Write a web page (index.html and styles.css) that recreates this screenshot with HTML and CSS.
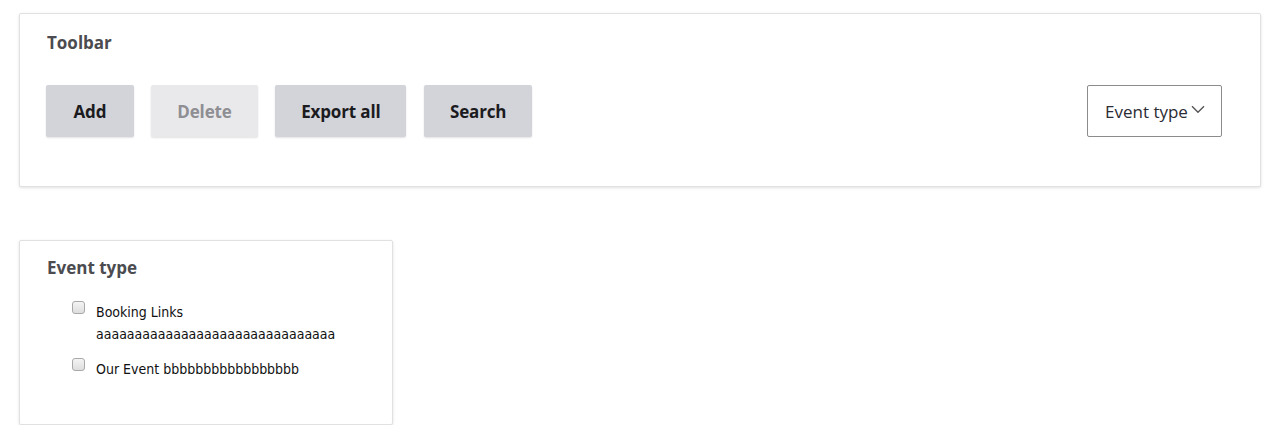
FILE: index.html
```html
<!DOCTYPE html>
<html lang="en">
<head>
<meta charset="utf-8">
<title>Toolbar</title>
<link rel="stylesheet" href="styles.css">
</head>
<body>
<section class="card toolbar-card">
  <h2 class="card-title">Toolbar</h2>
  <div class="toolbar">
    <div class="actions">
      <button class="btn">Add</button>
      <button class="btn" disabled>Delete</button>
      <button class="btn">Export all</button>
      <button class="btn">Search</button>
    </div>
    <button class="dropdown">
      <span>Event type</span>
      <svg class="chev" width="14" height="9" viewBox="0 0 14 9"><path d="M1 1.2 L7 7.2 L13 1.2" fill="none" stroke="#555" stroke-width="1.4"/></svg>
    </button>
  </div>
</section>

<section class="card filter-card">
  <h2 class="card-title">Event type</h2>
  <ul class="options">
    <li class="option"><input type="checkbox" class="check"><span class="opt-label">Booking Links aaaaaaaaaaaaaaaaaaaaaaaaaaaaaaa</span></li>
    <li class="option"><input type="checkbox" class="check"><span class="opt-label">Our Event bbbbbbbbbbbbbbbbb</span></li>
  </ul>
</section>
</body>
</html>
```

FILE: styles.css
```css
html, body {
  margin: 0;
  background: #ffffff;
}
body {
  padding: 13px 21px 0 19px;
  font-family: "Open Sans", "Noto Sans", sans-serif;
}
.card {
  background: #fff;
  border: 1px solid #e1e1e1;
  border-radius: 2px;
  box-shadow: 0 1px 3px rgba(0, 0, 0, 0.12);
  box-sizing: border-box;
}
.card-title {
  margin: 0;
  font-size: 17px;
  font-weight: 700;
  line-height: 23px;
  color: #4b4b50;
  padding-left: 1px;
}
.toolbar-card {
  padding: 17px 26px 49px 26px;
}
.toolbar {
  margin-top: 31px;
  display: flex;
  justify-content: space-between;
  align-items: center;
}
.actions {
  display: flex;
  gap: 17.5px;
}
.btn {
  height: 52px;
  padding: 0 26px;
  border: none;
  border-radius: 2px;
  background: #d3d4d9;
  color: #1b1b1f;
  font-family: "Open Sans", "Noto Sans", sans-serif;
  font-size: 17px;
  font-weight: 700;
  letter-spacing: -0.15px;
  box-shadow: 0 1px 2px rgba(0, 0, 0, 0.12);
}
.btn:first-child {
  padding: 0 27.5px;
}
.btn:disabled {
  background: #e9e9ec;
  color: #8e8e93;
}
.dropdown {
  margin-right: 12px;
  width: 135px;
  height: 52px;
  box-sizing: border-box;
  display: flex;
  align-items: center;
  padding: 0 0 0 17px;
  background: #fff;
  border: 1px solid #8c8c8c;
  border-radius: 2px;
  font-family: "Open Sans", "Noto Sans", sans-serif;
  font-size: 17px;
  font-weight: 400;
  color: #2b2b33;
}
.chev {
  margin-left: 3px;
  margin-top: -3px;
}
.filter-card {
  margin-top: 53px;
  width: 374px;
  padding: 15px 26px 44px 26px;
}
.options {
  list-style: none;
  margin: 22px 0 0 0;
  padding: 0 0 0 26px;
  display: flex;
  flex-direction: column;
  gap: 13px;
}
.option {
  display: flex;
  align-items: flex-start;
}
.check {
  appearance: none;
  -webkit-appearance: none;
  flex: none;
  width: 13px;
  height: 13px;
  margin: 0 11px 0 0;
  border: 1px solid #a9a9a9;
  border-radius: 3px;
  background: linear-gradient(#f4f4f4, #dedede);
  box-sizing: border-box;
}
.opt-label {
  width: 240px;
  font-family: "DejaVu Sans Condensed", "DejaVu Sans", sans-serif;
  font-stretch: condensed;
  font-size: 14px;
  line-height: 22px;
  color: #111;
}
```
